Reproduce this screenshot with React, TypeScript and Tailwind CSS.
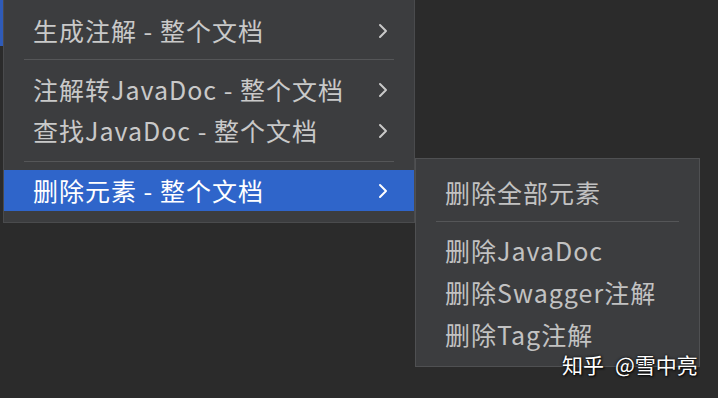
import React from "react";

const Chevron = ({ color }: { color: string }) => (
  <svg width="10" height="16" viewBox="0 0 10 16" fill="none">
    <polyline points="2,2 8,8 2,14" stroke={color} strokeWidth="2" strokeLinecap="round" strokeLinejoin="round" />
  </svg>
);

const font = { fontFamily: '"Noto Sans CJK SC", "Noto Sans", sans-serif' };

function MainItem({ label, active }: { label: string; active?: boolean }) {
  return (
    <div
      className={`flex h-[41px] items-center justify-between pl-[29px] pr-[26px] ${active ? "bg-[#2f65ca] text-white" : "text-[#c9c9c9]"}`}
    >
      <span className="text-[25px] leading-none tracking-[1px]">{label}</span>
      <Chevron color={active ? "#ffffff" : "#c9c9c9"} />
    </div>
  );
}

function SubItem({ label }: { label: string }) {
  return (
    <div className="flex h-[42px] items-center pl-[29px] text-[#c2c2c2]">
      <span className="text-[25px] leading-none tracking-[1px]">{label}</span>
    </div>
  );
}

export default function App() {
  return (
    <div className="relative h-[398px] w-[718px] overflow-hidden bg-[#2b2b2b]" style={font}>
      <div className="flex">
        <div className="h-[46px] w-[3px] bg-[#2f5bb8]" />
        <div className="flex w-[412px] flex-col border-x border-b border-[#4a4b4d] bg-[#3c3d3f] pb-[11px] pt-[10px]">
          <MainItem label="生成注解 - 整个文档" />
          <div className="flex h-[18px] items-start pt-[8px]">
            <div className="mx-[20px] h-px flex-1 bg-[#555658]" />
          </div>
          <MainItem label="注解转JavaDoc - 整个文档" />
          <MainItem label="查找JavaDoc - 整个文档" />
          <div className="flex h-[19px] items-start pt-[10px]">
            <div className="mx-[20px] h-px flex-1 bg-[#555658]" />
          </div>
          <MainItem label="删除元素 - 整个文档" active />
        </div>
      </div>

      <div className="absolute left-[415px] top-[158px] flex w-[285px] flex-col border border-[#4f5052] bg-[#3c3d3f] pb-[11px] pt-[12px]">
        <SubItem label="删除全部元素" />
        <div className="flex h-[16px] items-start pt-[8px]">
          <div className="ml-[20px] mr-[20px] h-px flex-1 bg-[#555658]" />
        </div>
        <SubItem label="删除JavaDoc" />
        <SubItem label="删除Swagger注解" />
        <SubItem label="删除Tag注解" />
      </div>

      <div
        className="absolute left-[562px] top-[354px] flex items-center text-[21px] leading-none text-white"
        style={{ textShadow: "0 0 3px rgba(0,0,0,0.9), 1px 1px 2px rgba(0,0,0,0.8)" }}
      >
        <span>知乎</span>
        <span className="ml-[11px]">@雪中亮</span>
      </div>
    </div>
  );
}
